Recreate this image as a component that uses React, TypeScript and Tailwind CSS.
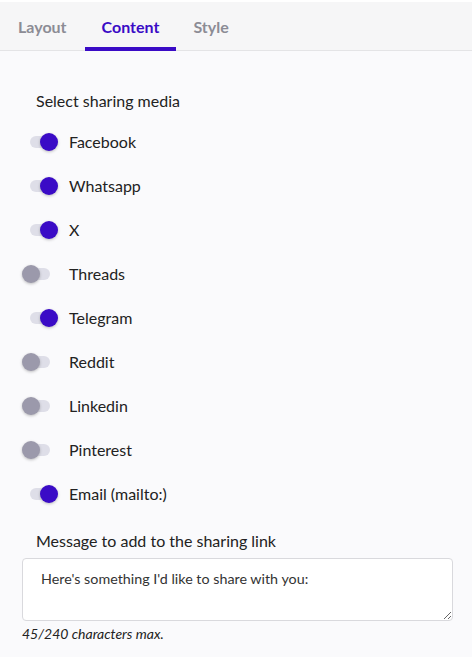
import { useState } from "react";

const MEDIA = [
  { name: "Facebook", on: true },
  { name: "Whatsapp", on: true },
  { name: "X", on: true },
  { name: "Threads", on: false },
  { name: "Telegram", on: true },
  { name: "Reddit", on: false },
  { name: "Linkedin", on: false },
  { name: "Pinterest", on: false },
  { name: "Email (mailto:)", on: true },
];

function Toggle({ on, onClick }: { on: boolean; onClick: () => void }) {
  return (
    <button type="button" onClick={onClick} className="relative w-[36px] h-[18px] shrink-0">
      <span className="absolute left-[8px] top-[3px] w-[20px] h-[12px] rounded-full bg-[#dedee8]" />
      <span
        className={
          on
            ? "absolute left-[18px] top-0 w-[18px] h-[18px] rounded-full bg-[#3a0bc6] shadow-[0_1px_3px_rgba(0,0,0,0.25)]"
            : "absolute left-0 top-0 w-[18px] h-[18px] rounded-full bg-[#9b99ab] shadow-[0_1px_3px_rgba(0,0,0,0.25)]"
        }
      />
    </button>
  );
}

export default function App() {
  const [media, setMedia] = useState(MEDIA);
  const [message, setMessage] = useState("Here's something I'd like to share with you:");

  const toggle = (i: number) =>
    setMedia((prev) => prev.map((m, j) => (j === i ? { ...m, on: !m.on } : m)));

  return (
    <div className="w-[472px] bg-white pt-[2px] font-['Lato','Liberation_Sans',sans-serif] text-[#222]">
      <div className="flex h-[49px] bg-[#f6f6f7] border-b border-[#e4e4e6]">
        <div className="flex items-center px-[18px] pt-[1px] text-[16px] font-bold text-[#8c8c95]">Layout</div>
        <div className="relative flex items-center px-[17px] pt-[1px] text-[16px] font-bold text-[#3a0bc6]">
          Content
          <span className="absolute left-0 right-0 bottom-[-1px] h-[4px] bg-[#3a0bc6]" />
        </div>
        <div className="flex items-center px-[17px] pt-[1px] text-[16px] font-bold text-[#8c8c95]">Style</div>
      </div>

      <div className="bg-[#fafafc] pt-[40px] pb-[14px]">
        <div className="pl-[36px] text-[16px] leading-[20px]">Select sharing media</div>
        <div className="flex flex-col gap-[26px] mt-[22px] pl-[22px]">
          {media.map((m, i) => (
            <div key={m.name} className="flex items-center gap-[11px] h-[18px]">
              <Toggle on={m.on} onClick={() => toggle(i)} />
              <span className="text-[16px] leading-[20px]">{m.name}</span>
            </div>
          ))}
        </div>

        <div className="pl-[36px] mt-[28px] text-[16px] leading-[20px]">Message to add to the sharing link</div>
        <div className="pr-[19px] pl-[22px] mt-[7px]">
          <textarea
            value={message}
            onChange={(e) => setMessage(e.target.value)}
            className="block w-full h-[63px] rounded-[4px] border border-[#d9d9dd] bg-white px-[18px] pt-[10px] pb-[10px] text-[14.3px] leading-[20px] text-[#333] outline-none resize-y"
          />
        </div>
        <div className="pl-[22px] mt-[4px] text-[14px] italic leading-[18px]">45/240 characters max.</div>
      </div>
    </div>
  );
}
